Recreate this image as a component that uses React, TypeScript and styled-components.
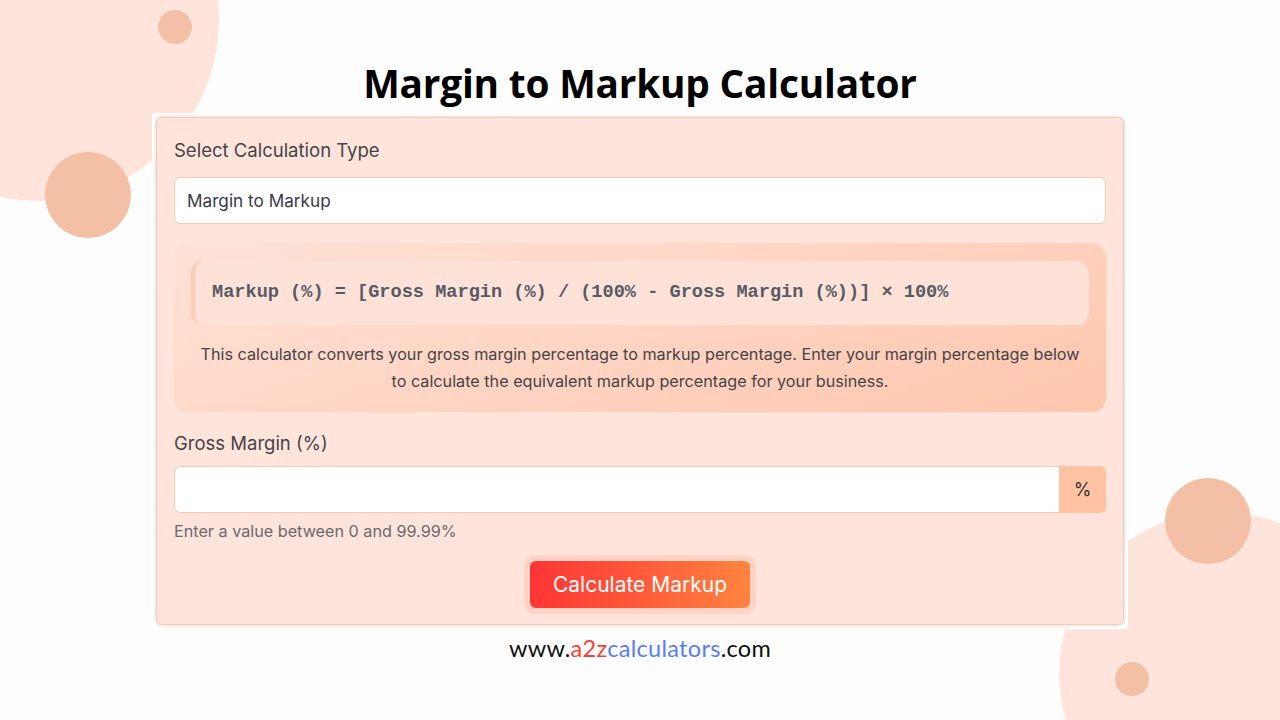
import React from "react";
import styled, { createGlobalStyle } from "styled-components";

const Global = createGlobalStyle`
  html, body { margin: 0; padding: 0; }
  body {
    background: #fdfdfd;
    font-family: Inter, "Noto Sans", sans-serif;
    width: 1280px;
    height: 720px;
    overflow: hidden;
  }
`;

const Page = styled.div`
  position: relative;
  width: 1280px;
  height: 720px;
  overflow: hidden;
  display: flex;
  flex-direction: column;
  align-items: center;
  padding-top: 59px;
  box-sizing: border-box;
`;

const Circle = styled.div<{ $x: number; $y: number; $r: number; $c: string }>`
  position: absolute;
  left: ${(p) => p.$x - p.$r}px;
  top: ${(p) => p.$y - p.$r}px;
  width: ${(p) => p.$r * 2}px;
  height: ${(p) => p.$r * 2}px;
  border-radius: 50%;
  background: ${(p) => p.$c};
  z-index: 0;
`;

const Title = styled.h1`
  position: relative;
  z-index: 1;
  margin: 0;
  font-family: "Open Sans", sans-serif;
  font-weight: 700;
  font-size: 38.8px;
  line-height: 48px;
  color: #000;
  letter-spacing: -0.2px;
`;

const Frame = styled.div`
  position: relative;
  z-index: 1;
  margin-top: 6px;
  width: 976px;
  padding: 4px;
  box-sizing: border-box;
  background: #ffffff;
`;

const Card = styled.div`
  background: #ffe4db;
  border: 1px solid #fcc9b5;
  border-radius: 6px;
  box-shadow: 0 0 4px rgba(0, 0, 0, 0.18);
  padding: 19px 17px 16px;
  display: flex;
  flex-direction: column;
`;

const Label = styled.div<{ $gap: number }>`
  font-size: 18.5px;
  line-height: 27px;
  color: #444448;
  margin-bottom: ${(p) => p.$gap}px;
`;

const Select = styled.div`
  height: 47px;
  box-sizing: border-box;
  background: #fff;
  border: 1px solid #fcc6af;
  border-radius: 6px;
  display: flex;
  align-items: center;
  padding: 0 12px;
  font-size: 17.2px;
  color: #3a3a48;
`;

const InfoBox = styled.div`
  margin-top: 19px;
  margin-bottom: 18px;
  border-radius: 14px;
  background: linear-gradient(160deg, #ffe2d7 0%, #ffd3c1 55%, #ffc6ad 100%);
  padding: 18px 17px 17px;
  display: flex;
  flex-direction: column;
`;

const Formula = styled.div`
  background: #ffe2d7;
  border-left: 4px solid #ffcbb2;
  border-radius: 12px;
  padding: 20px 17px;
  font-family: "Liberation Mono", "Courier New", monospace;
  font-weight: 700;
  font-size: 18.6px;
  line-height: 24px;
  color: #565b66;
  white-space: nowrap;
`;

const Description = styled.p`
  margin: 16px 0 0;
  text-align: center;
  font-size: 16.2px;
  line-height: 27px;
  color: #444448;
`;

const InputGroup = styled.div`
  display: flex;
  height: 47px;
`;

const Input = styled.div`
  flex: 1;
  background: #fff;
  border: 1px solid #fcc6af;
  border-right: none;
  border-radius: 6px 0 0 6px;
`;

const Addon = styled.div`
  width: 47px;
  display: flex;
  align-items: center;
  justify-content: center;
  background: #ffc3a4;
  border-radius: 0 6px 6px 0;
  font-size: 18px;
  color: #333;
`;

const Help = styled.div`
  margin-top: 7px;
  font-size: 16.2px;
  line-height: 22px;
  color: #6a6a70;
`;

const ButtonRow = styled.div`
  display: flex;
  justify-content: center;
  margin-top: 19px;
`;

const Button = styled.button`
  height: 47px;
  padding: 0 23px;
  border: none;
  border-radius: 6px;
  background: linear-gradient(90deg, #ff3535 0%, #ff5a3a 50%, #ff843f 100%);
  box-shadow: 0 0 0 6px #ffd2c6;
  color: #fff;
  font-family: Inter, sans-serif;
  font-size: 21px;
  cursor: pointer;
`;

const Footer = styled.div`
  position: relative;
  z-index: 1;
  margin-top: 4px;
  font-family: Lato, "Open Sans", sans-serif;
  font-size: 23.5px;
  line-height: 30px;
  color: #111;
  letter-spacing: 0.3px;
`;

const Red = styled.span`
  color: #ff3b32;
`;
const Blue = styled.span`
  color: #5b7cf8;
`;

export default function App() {
  return (
    <>
      <Global />
      <Page>
        <Circle $x={38} $y={20} $r={181} $c="#fee4da" />
        <Circle $x={175} $y={27} $r={17} $c="#f4c0a5" />
        <Circle $x={88} $y={195} $r={43} $c="#f4c0a5" />
        <Circle $x={1221} $y={674} $r={162} $c="#fee4da" />
        <Circle $x={1208} $y={521} $r={43} $c="#f4c0a5" />
        <Circle $x={1132} $y={679} $r={17} $c="#f4c0a5" />

        <Title>Margin to Markup Calculator</Title>
        <Frame>
          <Card>
            <Label $gap={13}>Select Calculation Type</Label>
            <Select>Margin to Markup</Select>
            <InfoBox>
              <Formula>
                Markup (%) = [Gross Margin (%) / (100% - Gross Margin (%))] × 100%
              </Formula>
              <Description>
                This calculator converts your gross margin percentage to markup percentage. Enter your
                margin percentage below
                <br />
                to calculate the equivalent markup percentage for your business.
              </Description>
            </InfoBox>
            <Label $gap={9}>Gross Margin (%)</Label>
            <InputGroup>
              <Input />
              <Addon>%</Addon>
            </InputGroup>
            <Help>Enter a value between 0 and 99.99%</Help>
            <ButtonRow>
              <Button>Calculate Markup</Button>
            </ButtonRow>
          </Card>
        </Frame>
        <Footer>
          www.<Red>a2z</Red>
          <Blue>calculators</Blue>.com
        </Footer>
      </Page>
    </>
  );
}
